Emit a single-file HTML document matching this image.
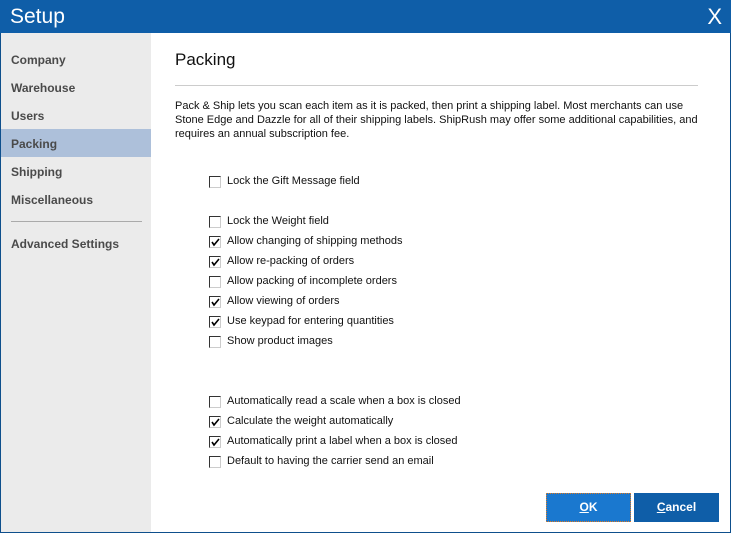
<!DOCTYPE html>
<html><head><style>
*{margin:0;padding:0;box-sizing:border-box}
body{width:731px;height:533px;overflow:hidden;background:#fff;font-family:"Liberation Sans",Arial,sans-serif;position:relative}
.win{position:absolute;left:0;top:0;width:731px;height:533px;border:1px solid #0e4f8c}
.title{position:absolute;left:0;top:0;width:731px;height:33px;background:#0f5ea8;color:#fff;font-size:21px;padding:5px 0 0 10px}
.x{position:absolute;right:9px;top:4px;font-size:22px;color:#fff}
.side{position:absolute;left:1px;top:33px;width:150px;height:499px;background:#ebebeb}
.side .t{position:absolute;left:10px;font-size:12px;font-weight:bold;color:#4a4a4a}
.sel{position:absolute;left:0;top:96px;width:150px;height:28px;background:#adc0da}
.hr{position:absolute;left:10px;top:188px;width:131px;height:1px;background:#aaa}
h1{position:absolute;left:175px;top:50px;font-size:17px;font-weight:normal;color:#111}
.line{position:absolute;left:175px;top:85px;width:523px;height:1px;background:#ccc}
.desc{position:absolute;left:175px;top:99px;width:528px;font-size:11px;line-height:14px;color:#111}
.cb{position:absolute;left:209px;width:12px;height:12px;border:1px solid #333;border-right-color:#ccc;border-bottom-color:#ccc;background:#fff}
.cb svg{position:absolute;left:0;top:0}
.lb{position:absolute;left:227px;font-size:11px;color:#111}
.btn{position:absolute;top:493px;width:85px;height:29px;color:#fff;font-size:12px;font-weight:bold;text-align:center;line-height:29px}
</style></head><body>
<div class="win"></div>
<div class="title">Setup<span class="x">X</span></div>
<div class="side">
<div class="sel"></div>
<div class="t" style="top:20px">Company</div>
<div class="t" style="top:48px">Warehouse</div>
<div class="t" style="top:76px">Users</div>
<div class="t" style="top:104px">Packing</div>
<div class="t" style="top:132px">Shipping</div>
<div class="t" style="top:160px">Miscellaneous</div>
<div class="hr"></div>
<div class="t" style="top:204px">Advanced Settings</div>
</div>
<h1>Packing</h1>
<div class="line"></div>
<div class="desc">Pack &amp; Ship lets you scan each item as it is packed, then print a shipping label. Most merchants can use Stone Edge and Dazzle for all of their shipping labels. ShipRush may offer some additional capabilities, and requires an annual subscription fee.</div>

<div class="cb" style="top:176px"></div><div class="lb" style="top:175px">Lock the Gift Message field</div>
<div class="cb" style="top:216px"></div><div class="lb" style="top:215px">Lock the Weight field</div>
<div class="cb" style="top:236px"><svg width="11" height="11"><path d="M2 5l2 3 5-6" stroke="#000" stroke-width="1.6" fill="none"/></svg></div><div class="lb" style="top:235px">Allow changing of shipping methods</div>
<div class="cb" style="top:256px"><svg width="11" height="11"><path d="M2 5l2 3 5-6" stroke="#000" stroke-width="1.6" fill="none"/></svg></div><div class="lb" style="top:255px">Allow re-packing of orders</div>
<div class="cb" style="top:276px"></div><div class="lb" style="top:275px">Allow packing of incomplete orders</div>
<div class="cb" style="top:296px"><svg width="11" height="11"><path d="M2 5l2 3 5-6" stroke="#000" stroke-width="1.6" fill="none"/></svg></div><div class="lb" style="top:295px">Allow viewing of orders</div>
<div class="cb" style="top:316px"><svg width="11" height="11"><path d="M2 5l2 3 5-6" stroke="#000" stroke-width="1.6" fill="none"/></svg></div><div class="lb" style="top:315px">Use keypad for entering quantities</div>
<div class="cb" style="top:336px"></div><div class="lb" style="top:335px">Show product images</div>
<div class="cb" style="top:396px"></div><div class="lb" style="top:395px">Automatically read a scale when a box is closed</div>
<div class="cb" style="top:416px"><svg width="11" height="11"><path d="M2 5l2 3 5-6" stroke="#000" stroke-width="1.6" fill="none"/></svg></div><div class="lb" style="top:415px">Calculate the weight automatically</div>
<div class="cb" style="top:436px"><svg width="11" height="11"><path d="M2 5l2 3 5-6" stroke="#000" stroke-width="1.6" fill="none"/></svg></div><div class="lb" style="top:435px">Automatically print a label when a box is closed</div>
<div class="cb" style="top:456px"></div><div class="lb" style="top:455px">Default to having the carrier send an email</div>

<div class="btn" style="left:546px;background:#1a78cf;outline:1px dotted #e07a20;outline-offset:-1px"><u>O</u>K</div>
<div class="btn" style="left:634px;background:#0f5ea8"><u>C</u>ancel</div>
</body></html>
